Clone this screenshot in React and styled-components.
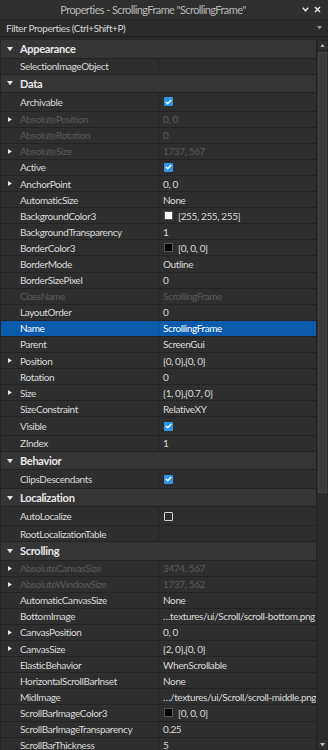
import React from 'react';
import styled, { createGlobalStyle } from 'styled-components';

const GlobalStyle = createGlobalStyle`
  html, body {
    margin: 0;
    padding: 0;
    background: #2e2e2e;
  }
  body {
    font-family: Lato, "Liberation Sans", sans-serif;
  }
`;

const rows = [
  { section: 'Appearance' },
  { name: 'SelectionImageObject', value: '' },
  { section: 'Data' },
  { name: 'Archivable', check: true, tall: true },
  { name: 'AbsolutePosition', value: '0, 0', expand: true, disabled: true },
  { name: 'AbsoluteRotation', value: '0', disabled: true },
  { name: 'AbsoluteSize', value: '1737, 567', expand: true, disabled: true },
  { name: 'Active', check: true },
  { name: 'AnchorPoint', value: '0, 0', expand: true },
  { name: 'AutomaticSize', value: 'None' },
  { name: 'BackgroundColor3', value: '[255, 255, 255]', swatch: '#ffffff' },
  { name: 'BackgroundTransparency', value: '1' },
  { name: 'BorderColor3', value: '[0, 0, 0]', swatch: '#000000' },
  { name: 'BorderMode', value: 'Outline' },
  { name: 'BorderSizePixel', value: '0' },
  { name: 'ClassName', value: 'ScrollingFrame', disabled: true },
  { name: 'LayoutOrder', value: '0' },
  { name: 'Name', value: 'ScrollingFrame', selected: true },
  { name: 'Parent', value: 'ScreenGui' },
  { name: 'Position', value: '{0, 0},{0, 0}', expand: true },
  { name: 'Rotation', value: '0' },
  { name: 'Size', value: '{1, 0},{0.7, 0}', expand: true },
  { name: 'SizeConstraint', value: 'RelativeXY' },
  { name: 'Visible', check: true, tall: true },
  { name: 'ZIndex', value: '1' },
  { section: 'Behavior' },
  { name: 'ClipsDescendants', check: true, tall: true },
  { section: 'Localization' },
  { name: 'AutoLocalize', check: false, tall: true },
  { name: 'RootLocalizationTable', value: '' },
  { section: 'Scrolling' },
  { name: 'AbsoluteCanvasSize', value: '3474, 567', expand: true, disabled: true },
  { name: 'AbsoluteWindowSize', value: '1737, 562', expand: true, disabled: true },
  { name: 'AutomaticCanvasSize', value: 'None' },
  { name: 'BottomImage', value: '…textures/ui/Scroll/scroll-bottom.png' },
  { name: 'CanvasPosition', value: '0, 0', expand: true },
  { name: 'CanvasSize', value: '{2, 0},{0, 0}', expand: true },
  { name: 'ElasticBehavior', value: 'WhenScrollable' },
  { name: 'HorizontalScrollBarInset', value: 'None' },
  { name: 'MidImage', value: '…/textures/ui/Scroll/scroll-middle.png' },
  { name: 'ScrollBarImageColor3', value: '[0, 0, 0]', swatch: '#000000' },
  { name: 'ScrollBarImageTransparency', value: '0.25' },
  { name: 'ScrollBarThickness', value: '5' },
];

const Panel = styled.div`
  width: 328px;
  height: 750px;
  display: flex;
  flex-direction: column;
  overflow: hidden;
  background: #2e2e2e;
  color: #cccccc;
  font-size: 10px;
  letter-spacing: -0.38px;
`;

const TitleBar = styled.div`
  height: 20px;
  flex: none;
  display: flex;
  align-items: center;
  background: #2f2f2f;
  border-bottom: 1px solid #262626;
  box-sizing: border-box;
`;

const Title = styled.div`
  flex: 1;
  text-align: center;
  color: #b8b8b8;
  font-size: 11px;
  letter-spacing: -0.6px;
  white-space: nowrap;
  padding-left: 4px;
`;

const TitleIcons = styled.div`
  display: flex;
  align-items: center;
  gap: 5px;
  padding-right: 7px;
`;

const FilterBar = styled.div`
  height: 16px;
  flex: none;
  display: flex;
  align-items: center;
  justify-content: space-between;
  padding: 0 6px;
  background: #2b2b2b;
  border-bottom: 1px solid #1f1f1f;
  color: #d6d6d6;
  font-size: 10px;
  letter-spacing: -0.4px;
`;

const Gap = styled.div`
  height: 3px;
  flex: none;
  background: #282828;
`;

const Body = styled.div`
  flex: 1;
  display: flex;
  min-height: 0;
`;

const Grid = styled.div`
  flex: 1;
  overflow: hidden;
  border-left: 1px solid #252525;
  border-right: 1px solid #222222;
`;

const Row = styled.div`
  height: ${p => p.$h}px;
  display: flex;
  align-items: stretch;
  box-sizing: border-box;
  border-bottom: 1px solid #232323;
  background: ${p => (p.$selected ? '#0b5aab' : '#2e2e2e')};
  color: ${p => (p.$selected ? '#ffffff' : p.$disabled ? '#5a5a5a' : '#dadada')};
`;

const SectionRow = styled(Row)`
  background: #353535;
  color: #e8e8e8;
  font-weight: 700;
  font-size: 11px;
  letter-spacing: -0.3px;
  align-items: center;
`;

const ArrowSlot = styled.div`
  width: 19px;
  flex: none;
  display: flex;
  align-items: center;
  justify-content: center;
  padding-right: 2px;
  box-sizing: border-box;
`;

const NameCell = styled.div`
  width: 157px;
  flex: none;
  display: flex;
  align-items: center;
  border-right: 1px solid ${p => (p.$selected ? '#0a4d92' : '#232323')};
  white-space: nowrap;
  overflow: hidden;
`;

const ValueCell = styled.div`
  flex: 1;
  display: flex;
  align-items: center;
  gap: 4px;
  padding-left: 4px;
  white-space: nowrap;
  overflow: hidden;
`;

const CheckBox = styled.div`
  width: 9px;
  height: 9px;
  margin-left: 1px;
  border-radius: 1px;
  box-sizing: border-box;
  display: flex;
  align-items: center;
  justify-content: center;
  background: ${p => (p.$on ? '#2f95ea' : 'transparent')};
  border: ${p => (p.$on ? 'none' : '1.5px solid #d6d6d6')};
`;

const Swatch = styled.div`
  width: 9px;
  height: 9px;
  margin-left: 1px;
  margin-right: 1px;
  box-sizing: border-box;
  border: 1px solid #555555;
  background: ${p => p.$color};
`;

const ScrollBar = styled.div`
  width: 11px;
  flex: none;
  display: flex;
  flex-direction: column;
  background: #2b2b2b;
`;

const ScrollButton = styled.div`
  height: 11px;
  flex: none;
  display: flex;
  align-items: center;
  justify-content: center;
  background: #303030;
  border: 1px solid #262626;
  box-sizing: border-box;
`;

const Thumb = styled.div`
  height: ${p => p.$h}px;
  flex: none;
  margin: 1px 1px 0;
  background: #3a3a3a;
  border: 1px solid #444444;
  box-sizing: border-box;
`;

const Track = styled.div`
  flex: 1;
`;

const Tri = ({ dir = 'down', size = 5, color = '#e6e6e6' }) => {
  const pts = {
    down: `0,0 ${size},0 ${size / 2},${size * 0.7}`,
    up: `0,${size * 0.7} ${size},${size * 0.7} ${size / 2},0`,
    right: `0,0 ${size * 0.8},${size / 2} 0,${size}`,
  }[dir];
  const w = dir === 'right' ? size * 0.8 : size;
  const h = dir === 'right' ? size : size * 0.7;
  return (
    <svg width={w} height={h} viewBox={`0 0 ${w} ${h}`} style={{ display: 'block' }}>
      <polygon points={pts} fill={color} />
    </svg>
  );
};

const Check = () => (
  <svg width="7" height="6" viewBox="0 0 7 6" style={{ display: 'block' }}>
    <polyline points="0.8,3 2.7,4.8 6.2,1" fill="none" stroke="#ffffff" strokeWidth="1.4" />
  </svg>
);

const PropertyRow = ({ row }) => {
  const h = row.tall ? 18.5 : 16.1;
  return (
    <Row $h={h} $selected={row.selected} $disabled={row.disabled}>
      <NameCell $selected={row.selected}>
        <ArrowSlot>{row.expand && <Tri dir="right" size={5} />}</ArrowSlot>
        {row.name}
      </NameCell>
      <ValueCell>
        {row.check !== undefined && (
          <CheckBox $on={row.check}>{row.check && <Check />}</CheckBox>
        )}
        {row.swatch && <Swatch $color={row.swatch} />}
        {row.value}
      </ValueCell>
    </Row>
  );
};

export default function App() {
  return (
    <>
      <GlobalStyle />
      <Panel>
        <TitleBar>
          <Title>Properties - ScrollingFrame "ScrollingFrame"</Title>
          <TitleIcons>
            <svg width="7" height="5" viewBox="0 0 7 5">
              <polyline points="0.8,0.8 3.5,3.8 6.2,0.8" fill="none" stroke="#e0e0e0" strokeWidth="1.5" />
            </svg>
            <svg width="7" height="7" viewBox="0 0 7 7">
              <path d="M1 1 L6 6 M6 1 L1 6" stroke="#e0e0e0" strokeWidth="1.5" />
            </svg>
          </TitleIcons>
        </TitleBar>
        <FilterBar>
          <span>Filter Properties (Ctrl+Shift+P)</span>
          <Tri dir="down" size={5} color="#9a9a9a" />
        </FilterBar>
        <Gap />
        <Body>
          <Grid>
            {rows.map((row, i) =>
              row.section ? (
                <SectionRow key={i} $h={18.5}>
                  <ArrowSlot><Tri dir="down" size={6} /></ArrowSlot>
                  {row.section}
                </SectionRow>
              ) : (
                <PropertyRow key={i} row={row} />
              )
            )}
          </Grid>
          <ScrollBar>
            <ScrollButton><Tri dir="up" size={5} color="#bdbdbd" /></ScrollButton>
            <Thumb $h={441} />
            <Track />
            <ScrollButton><Tri dir="down" size={5} color="#bdbdbd" /></ScrollButton>
          </ScrollBar>
        </Body>
      </Panel>
    </>
  );
}
